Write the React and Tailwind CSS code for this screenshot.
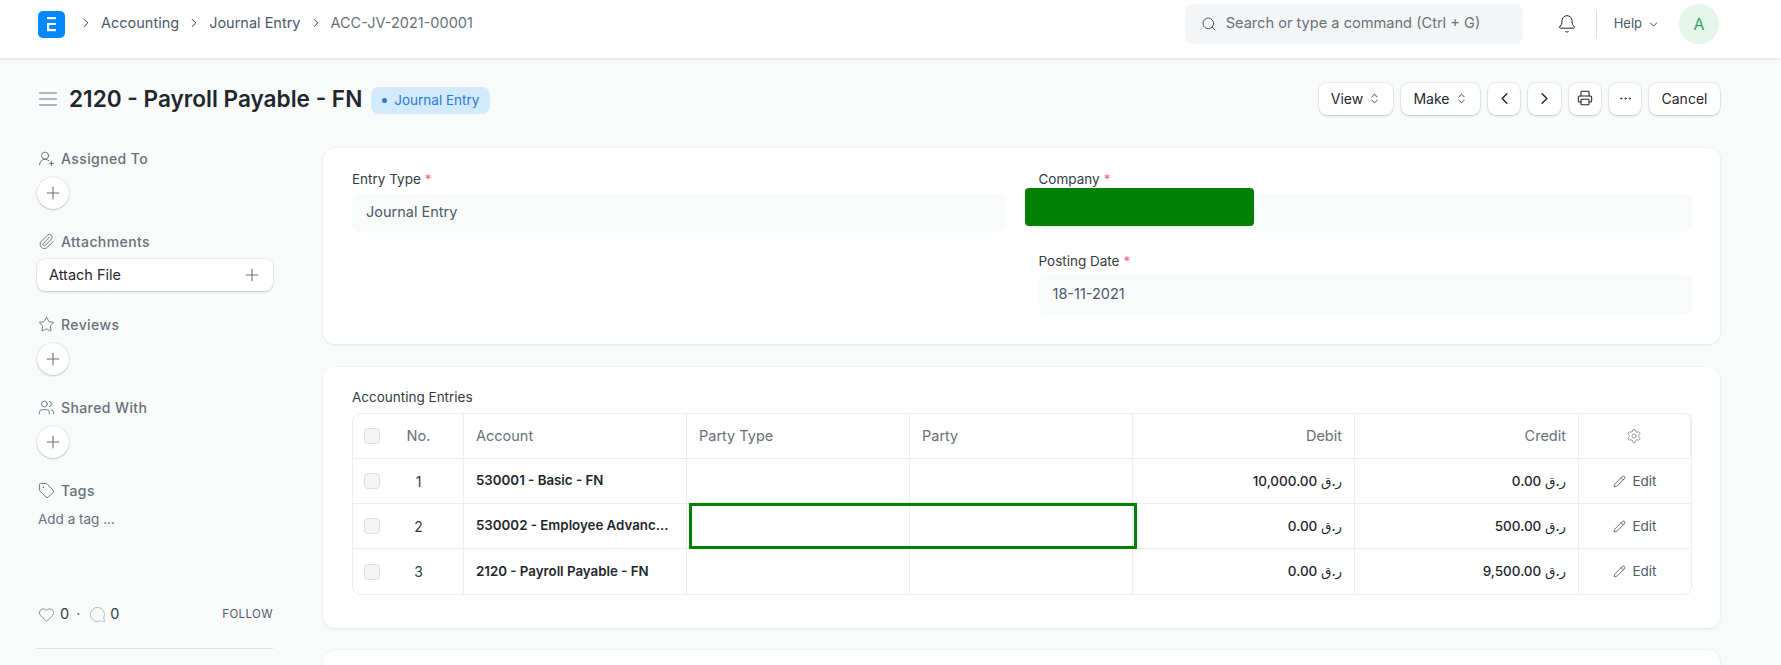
import React from 'react'
import {
  Bell, ChevronDown, ChevronLeft, ChevronRight, ChevronsUpDown, Ellipsis, Heart, MessageCircle,
  Paperclip, Pencil, Plus, Printer, Search, Settings, Star, Tag, UserRoundPlus, Users,
} from 'lucide-react'

const btn = 'h-8 pb-[2px] flex items-center justify-center rounded-lg bg-white text-[14px] text-[#1f272e] shadow-[0_0_0_0.5px_rgba(25,39,52,0.12),0_1px_2px_rgba(25,39,52,0.18)]'
const rowGrid = 'grid grid-cols-[111px_223px_223px_223px_222px_224px_112px] h-[45px]'
const cell = 'h-full flex items-center border-r border-[#ebeef0]'
const card = 'rounded-xl bg-white shadow-[0_0_0_0.5px_rgba(25,39,52,0.04),0_1px_3px_rgba(25,39,52,0.08)]'

const rows = [
  { no: 1, account: '530001 - Basic - FN', debit: '10,000.00', credit: '0.00' },
  { no: 2, account: '530002 - Employee Advanc...', debit: '0.00', credit: '500.00' },
  { no: 3, account: '2120 - Payroll Payable - FN', debit: '0.00', credit: '9,500.00' },
]

const Logo = () => (
  <svg width="27" height="27" viewBox="0 0 27 27">
    <rect width="27" height="27" rx="5" fill="#0089ff" />
    <rect x="9" y="6" width="9" height="2.2" fill="#fff" />
    <rect x="9" y="12" width="9" height="2" fill="#fff" />
    <rect x="9" y="12" width="2.2" height="8" fill="#fff" />
    <rect x="9" y="18" width="9" height="2.2" fill="#fff" />
  </svg>
)

const Crumb = ({ children, muted }) => (
  <>
    <ChevronRight size={14} strokeWidth={1.6} className="text-[#1f272e] mx-[8px]" />
    <span className={muted ? 'text-[#687178]' : 'text-[#4c5a67]'}>{children}</span>
  </>
)

const SideLabel = ({ icon: Icon, children }) => (
  <div className="h-5 flex items-center text-[14px] font-medium tracking-[0.4px] text-[#687178]">
    <span className="w-6 pl-[1px] flex">
      <Icon size={17} strokeWidth={1.1} className="text-[#4c5a67]" />
    </span>
    {children}
  </div>
)

const AddCircle = () => (
  <button className="mt-[9px] w-8 h-8 rounded-full bg-white flex items-center justify-center text-[#687178] shadow-[0_0_0_0.5px_rgba(25,39,52,0.12),0_1px_2px_rgba(25,39,52,0.2)]">
    <Plus size={20} strokeWidth={1.3} />
  </button>
)

const Field = ({ label, value, className }) => (
  <div className={className}>
    <div className="pt-[1px] h-[21px] mb-[4px] flex items-center text-[13.5px] text-[#333c44]">
      {label}<span className="text-[#ec6478] ml-1">*</span>
    </div>
    <div className="h-[39px] px-[14px] pb-[1px] flex items-center rounded-lg bg-[#f9fafa] text-[14.5px] text-[#4c5a67]">{value}</div>
  </div>
)

const Money = ({ value }) => (
  <div className={`${cell} justify-end pr-[12px] text-[13.5px] font-medium text-[#1f272e]`}>
    {'ر.ق ' + value}
  </div>
)

export default function App() {
  return (
    <div className='h-[665px] overflow-hidden bg-[#f9fafa] font-["Inter","DejaVu_Sans",sans-serif]'>
      {/* navbar */}
      <nav className="h-[58px] bg-white shadow-[0_1px_2px_rgba(25,39,52,0.12)] flex items-center pl-[38px] pr-[62px] pb-[10px] text-[14.5px]">
        <Logo />
        <div className="flex items-center ml-[6px] mb-[2px]">
          <Crumb>Accounting</Crumb>
          <Crumb>Journal Entry</Crumb>
          <Crumb muted>ACC-JV-2021-00001</Crumb>
        </div>
        <div className="ml-auto w-[338px] h-10 rounded-lg bg-[#f4f5f6] flex items-center pl-[16px] text-[14.6px] text-[#687178]">
          <Search size={16} strokeWidth={1.5} className="text-[#4c5a67]" />
          <span className="ml-[9px]">Search or type a command (Ctrl + G)</span>
        </div>
        <Bell size={20} strokeWidth={1.2} className="ml-[34px] text-[#1f272e]" />
        <div className="ml-[19px] w-px h-[27px] bg-[#dce0e3]" />
        <div className="ml-[17px] flex items-center text-[13px] text-[#4c5a67]">
          Help <ChevronDown size={13} strokeWidth={1.8} className="ml-[5px] text-[#333c44]" />
        </div>
        <div className="ml-[19px] w-10 h-10 rounded-full bg-[#e4f5e9] flex items-center justify-center text-[#38a160] text-[16px]">A</div>
      </nav>

      {/* page head */}
      <header className="h-[90px] pt-[25px] pl-[39px] pr-[61px] flex items-start">
        <div className="h-8 flex items-center">
          <svg width="18" height="14" viewBox="0 0 18 14" className="text-[#98a1a9]">
            <path d="M0 1h18M0 7h18M0 13h18" stroke="currentColor" strokeWidth="1.5" />
          </svg>
          <h1 className="ml-[12px] text-[22.6px] font-semibold text-[#1f272e] whitespace-nowrap">2120 - Payroll Payable - FN</h1>
          <div className="ml-[9px] mt-[3px] h-[27px] px-[11px] rounded-lg bg-[#d3e9fc] flex items-center text-[13.5px] text-[#2b7cd3]">
            <span className="w-[5px] h-[5px] rounded-full bg-[#2b7cd3] mr-[7px]" />
            Journal Entry
          </div>
        </div>
        <div className="ml-auto flex gap-2">
          <button className={`${btn} w-[74px]`}>View<ChevronsUpDown size={13} strokeWidth={1.6} className="ml-[5px]" /></button>
          <button className={`${btn} w-[79px]`}>Make<ChevronsUpDown size={13} strokeWidth={1.6} className="ml-[5px]" /></button>
          <button className={`${btn} w-8`}><ChevronLeft size={19} strokeWidth={1.8} /></button>
          <button className={`${btn} w-[33px]`}><ChevronRight size={19} strokeWidth={1.8} /></button>
          <button className={`${btn} w-8`}><Printer size={16} strokeWidth={1.6} /></button>
          <button className={`${btn} w-8`}><Ellipsis size={15} strokeWidth={1.6} /></button>
          <button className={`${btn} w-[71px]`}>Cancel</button>
        </div>
      </header>

      <div className="flex pl-[37px]">
        {/* sidebar */}
        <aside className="w-[236px] shrink-0">
          <div className="h-[83px]">
            <SideLabel icon={UserRoundPlus}>Assigned To</SideLabel>
            <AddCircle />
          </div>
          <div className="h-[83px]">
            <SideLabel icon={Paperclip}>Attachments</SideLabel>
            <button className="mt-[8px] w-full h-8 pl-[12px] pr-[11px] flex items-center justify-between rounded-lg bg-white text-[14.5px] text-[#1f272e] shadow-[0_0_0_0.5px_rgba(25,39,52,0.12),0_1px_2px_rgba(25,39,52,0.18)]">
              Attach File <Plus size={20} strokeWidth={1.3} className="text-[#687178]" />
            </button>
          </div>
          <div className="h-[83px]">
            <SideLabel icon={Star}>Reviews</SideLabel>
            <AddCircle />
          </div>
          <div className="h-[83px]">
            <SideLabel icon={Users}>Shared With</SideLabel>
            <AddCircle />
          </div>
          <SideLabel icon={Tag}>Tags</SideLabel>
          <div className="mt-[9px] h-5 pl-px flex items-center text-[13.5px] text-[#687178]">Add a tag ...</div>
          <div className="mt-[75px] h-5 flex items-center text-[14.5px] text-[#333c44]">
            <Heart size={17} strokeWidth={1} className="ml-[1px] text-[#687178]" />
            <span className="ml-[5px]">0</span>
            <span className="ml-[7px] text-[#687178]">·</span>
            <MessageCircle size={17} strokeWidth={1} className="ml-[9px] text-[#98a1a9] -scale-x-100" />
            <span className="ml-[4px]">0</span>
            <span className="ml-auto pt-[2px] text-[11.5px] tracking-[0.4px] text-[#4c5a67]">FOLLOW</span>
          </div>
          <div className="mt-[24px] h-px bg-[#dce0e3]" />
        </aside>

        {/* main column */}
        <main className="ml-[50px] w-[1397px] shrink-0">
          <section className={`${card} h-[196px] pl-[29px] pr-[28px] pt-[20px] grid grid-cols-2 gap-x-[33px] items-start`}>
            <Field label="Entry Type" value="Journal Entry" />
            <div>
              <div className="relative">
                <Field label="Company" value="" />
                <div className="absolute left-[-14px] top-[20px] w-[229px] h-[38px] rounded-sm bg-[#008000]" />
              </div>
              <Field className="mt-[18px]" label="Posting Date" value="18-11-2021" />
            </div>
          </section>

          <section className={`${card} mt-[23px] h-[261px] pl-[29px] pr-[28px] pt-[20px]`}>
            <div className="h-5 mb-[6px] flex items-center text-[13.5px] text-[#333c44]">Accounting Entries</div>
            <div className="relative rounded-lg border border-[#ebeef0]">
              <div className={`${rowGrid} border-b border-[#ebeef0] pb-[1px] text-[14.5px] text-[#687178]`}>
                <div className={cell}>
                  <span className="ml-[11px] w-4 h-4 rounded bg-[#f4f5f6] border border-[#dce0e3]" />
                  <span className="w-[77px] text-center">No.</span>
                </div>
                <div className={`${cell} pl-[12px]`}>Account</div>
                <div className={`${cell} pl-[12px]`}>Party Type</div>
                <div className={`${cell} pl-[12px]`}>Party</div>
                <div className={`${cell} justify-end pr-[12px]`}>Debit</div>
                <div className={`${cell} justify-end pr-[12px]`}>Credit</div>
                <div className={`${cell} justify-center pr-[2px]`}>
                  <Settings size={16} strokeWidth={1} className="text-[#687178]" />
                </div>
              </div>
              {rows.map((row, i) => (
                <div key={row.no} className={`${rowGrid} ${i < 2 ? 'border-b border-[#ebeef0]' : ''}`}>
                  <div className={cell}>
                    <span className="ml-[11px] w-4 h-4 rounded bg-[#f4f5f6] border border-[#dce0e3]" />
                    <span className="w-[77px] text-center text-[14px] text-[#333c44]">{row.no}</span>
                  </div>
                  <div className={`${cell} pl-[12px] text-[13.3px] font-semibold text-[#1f272e] whitespace-nowrap`}>{row.account}</div>
                  <div className={cell} />
                  <div className={cell} />
                  <Money value={row.debit} />
                  <Money value={row.credit} />
                  <div className="h-full flex items-center justify-center gap-[6px] text-[13.5px] text-[#4c5a67]">
                    <Pencil size={13} strokeWidth={1.2} className="text-[#1f272e]" />
                    Edit
                  </div>
                </div>
              ))}
              <div className="absolute left-[336px] top-[89px] w-[448px] h-[46px] border-[3px] border-[#008000]" />
            </div>
          </section>

          <section className={`${card} mt-[22px] h-[100px]`} />
        </main>
      </div>
    </div>
  )
}
